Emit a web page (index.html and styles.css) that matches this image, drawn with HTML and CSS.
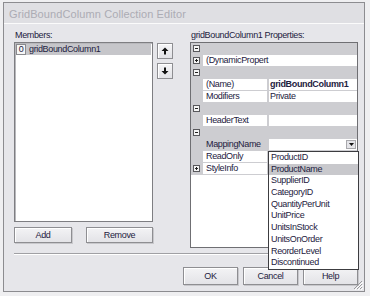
FILE: index.html
```html
<!DOCTYPE html>
<html>
<head>
<meta charset="utf-8">
<link rel="stylesheet" href="styles.css">
</head>
<body>
<div class="window">
  <div class="titlebar">GridBoundColumn Collection Editor</div>
  <div class="client">
    <div class="main">
      <div class="left">
        <div class="label">Members:</div>
        <div class="list">
          <div class="item"><span class="idx">0</span><span class="name">gridBoundColumn1</span></div>
        </div>
        <div class="btnrow">
          <button class="btn add">Add</button>
          <button class="btn remove">Remove</button>
        </div>
      </div>
      <div class="arrows">
        <button class="abtn"><svg width="8" height="8" viewBox="0 0 8 8"><path d="M4 0.5 L7.5 4 L5 4 L5 7.5 L3 7.5 L3 4 L0.5 4 Z" fill="#111"/></svg></button>
        <button class="abtn"><svg width="8" height="8" viewBox="0 0 8 8"><path d="M4 7.5 L7.5 4 L5 4 L5 0.5 L3 0.5 L3 4 L0.5 4 Z" fill="#111"/></svg></button>
      </div>
      <div class="right">
        <div class="label">gridBoundColumn1 Properties:</div>
        <div class="pgrid">
          <div class="rows">
            <div class="row cat"><span class="gut"><i class="tg minus"></i></span></div>
            <div class="row prop wide"><span class="gut"><i class="tg plus"></i></span><span class="lbl">(DynamicPropert</span><span class="val"></span></div>
            <div class="row cat"><span class="gut"><i class="tg minus"></i></span></div>
            <div class="row prop"><span class="gut"></span><span class="lbl">(Name)</span><span class="val bold">gridBoundColumn1</span></div>
            <div class="row prop"><span class="gut"></span><span class="lbl">Modifiers</span><span class="val">Private</span></div>
            <div class="row cat"><span class="gut"><i class="tg minus"></i></span></div>
            <div class="row prop"><span class="gut"></span><span class="lbl">HeaderText</span><span class="val"></span></div>
            <div class="row cat"><span class="gut"><i class="tg minus"></i></span></div>
            <div class="row prop selected"><span class="gut"></span><span class="lbl">MappingName</span><span class="val">
              <span class="ddbtn"><svg width="5" height="3" viewBox="0 0 5 3"><path d="M0 0 H5 L2.5 3 Z" fill="#111"/></svg></span>
              <div class="dropdown">
                <div class="opt">ProductID</div>
                <div class="opt hl">ProductName</div>
                <div class="opt">SupplierID</div>
                <div class="opt">CategoryID</div>
                <div class="opt">QuantityPerUnit</div>
                <div class="opt">UnitPrice</div>
                <div class="opt">UnitsInStock</div>
                <div class="opt">UnitsOnOrder</div>
                <div class="opt">ReorderLevel</div>
                <div class="opt">Discontinued</div>
              </div>
            </span></div>
            <div class="row prop"><span class="gut"></span><span class="lbl">ReadOnly</span><span class="val"></span></div>
            <div class="row prop"><span class="gut"><i class="tg plus"></i></span><span class="lbl">StyleInfo</span><span class="val"></span></div>
          </div>
        </div>
      </div>
    </div>
    <div class="sep"></div>
    <div class="footer">
      <button class="btn fbtn">OK</button>
      <button class="btn fbtn">Cancel</button>
      <button class="btn fbtn">Help</button>
    </div>
  </div>
  <svg class="grip" width="10" height="10" viewBox="0 0 10 10">
    <path d="M9 1 L1 9 M9 4 L4 9 M9 7 L7 9" stroke="#9a9a9e" stroke-width="1"/>
    <path d="M10 2 L2 10 M10 5 L5 10 M10 8 L8 10" stroke="#ffffff" stroke-width="1"/>
  </svg>
</div>
</body>
</html>
```

FILE: styles.css
```css
* { box-sizing: border-box; }
html, body { margin: 0; padding: 0; }
body {
  width: 370px;
  height: 296px;
  background: #efeff1;
  font-family: "Liberation Sans", Arial, sans-serif;
  font-size: 9px;
  letter-spacing: -0.35px;
  color: #1d2140;
  overflow: hidden;
}
.window {
  position: relative;
  margin: 2px 0 0 3px;
  width: 362px;
  height: 290px;
  border: 1px solid #8c8c90;
  background: #e6e6ea;
  display: flex;
  flex-direction: column;
}
.titlebar {
  height: 21px;
  padding: 4px 0 0 5px;
  line-height: 14px;
  font-size: 11px;
  color: #acacb4;
  background: #dfdfe3;
  border-bottom: 1px solid #fbfbfb;
  letter-spacing: 0.1px;
}
.client {
  flex: 1;
  padding: 5px 6px 0 10px;
  display: flex;
  flex-direction: column;
}
.main {
  display: flex;
}
.label {
  height: 13px;
  line-height: 13px;
  padding-left: 1px;
}
.left {
  width: 139px;
  display: flex;
  flex-direction: column;
}
.list {
  height: 180px;
  background: #fff;
  border: 1px solid #7e7e82;
  box-shadow: inset 1px 1px 0 #b8b8bc;
  padding: 1px 1px 0 1px;
}
.item {
  display: flex;
  height: 11px;
  line-height: 11px;
}
.idx {
  width: 10px;
  border: 1px solid #8a8a8e;
  background: #f6f6f6;
  text-align: center;
  line-height: 9px;
}
.name {
  flex: 1;
  background: #c6c6ca;
  padding-left: 3px;
}
.btnrow {
  display: flex;
  margin-top: 5px;
  gap: 14px;
}
.btn {
  font-family: "Liberation Sans", Arial, sans-serif;
  font-size: 9px;
  letter-spacing: -0.35px;
  color: #1d2140;
  background: linear-gradient(#f3f3f5, #e3e3e7);
  border: 1px solid #8e8e92;
  box-shadow: inset 1px 1px 0 #ffffff, 1px 1px 0 #c8c8cc;
  padding: 0;
  margin: 0;
}
.add { width: 58px; height: 16px; }
.remove { width: 67px; height: 16px; }
.arrows {
  width: 16px;
  margin-left: 4px;
  padding-top: 14px;
  display: flex;
  flex-direction: column;
  gap: 4px;
}
.abtn {
  width: 16px;
  height: 16px;
  padding: 0;
  margin: 0;
  display: flex;
  align-items: center;
  justify-content: center;
  background: linear-gradient(#f5f5f7, #e2e2e6);
  border: 1px solid #8e8e92;
  box-shadow: inset 1px 1px 0 #fff;
}
.right {
  width: 168px;
  margin-left: 17px;
  display: flex;
  flex-direction: column;
}
.pgrid {
  height: 206px;
  border: 1px solid #6f6f73;
  background: #fff;
}
.rows {
  background: #cdcdd1;
  display: flex;
  flex-direction: column;
  gap: 1px;
  padding-bottom: 1px;
}
.row {
  height: 11px;
  line-height: 11px;
  display: grid;
  grid-template-columns: 11px 64px 89px;
  column-gap: 1px;
}
.row.prop .lbl { background: #fff; padding-left: 3px; white-space: nowrap; overflow: hidden; }
.row.prop .val { background: #fff; padding-left: 1px; position: relative; margin-left: 1px; white-space: nowrap; }
.row.wide .lbl { grid-column: 2 / 4; }
.row.wide .val { display: none; }
.row.selected .lbl { background: #cdcdd1; }
.bold { font-weight: bold; }
.gut {
  display: flex;
  align-items: center;
  justify-content: center;
}
.tg {
  display: block;
  width: 7px;
  height: 7px;
  border: 1px solid #58585c;
  background: #f4f4f4;
  position: relative;
}
.tg::before {
  content: "";
  position: absolute;
  left: 1px; top: 2px;
  width: 3px; height: 1px;
  background: #222;
}
.tg.plus::after {
  content: "";
  position: absolute;
  left: 2px; top: 1px;
  width: 1px; height: 3px;
  background: #222;
}
.ddbtn {
  position: absolute;
  right: 1px;
  top: 1px;
  width: 10px;
  height: 9px;
  background: #e4e4e8;
  border: 1px solid #a8a8ac;
  display: flex;
  align-items: center;
  justify-content: center;
}
.dropdown {
  position: absolute;
  left: -1px;
  top: 12px;
  width: 91px;
  background: #fff;
  border: 1px solid #3c3c40;
  z-index: 5;
}
.opt {
  height: 11.7px;
  line-height: 11.7px;
  padding-left: 2px;
}
.opt.hl { background: #c8c8cc; }
.sep {
  margin-top: 5px;
  border-top: 1px solid #a0a0a4;
  border-bottom: 1px solid #ffffff;
}
.footer {
  margin-top: 12px;
  display: flex;
  justify-content: flex-end;
  gap: 5px;
}
.fbtn { width: 55px; height: 18px; }
.grip {
  position: absolute;
  right: 1px;
  bottom: 1px;
}
```
